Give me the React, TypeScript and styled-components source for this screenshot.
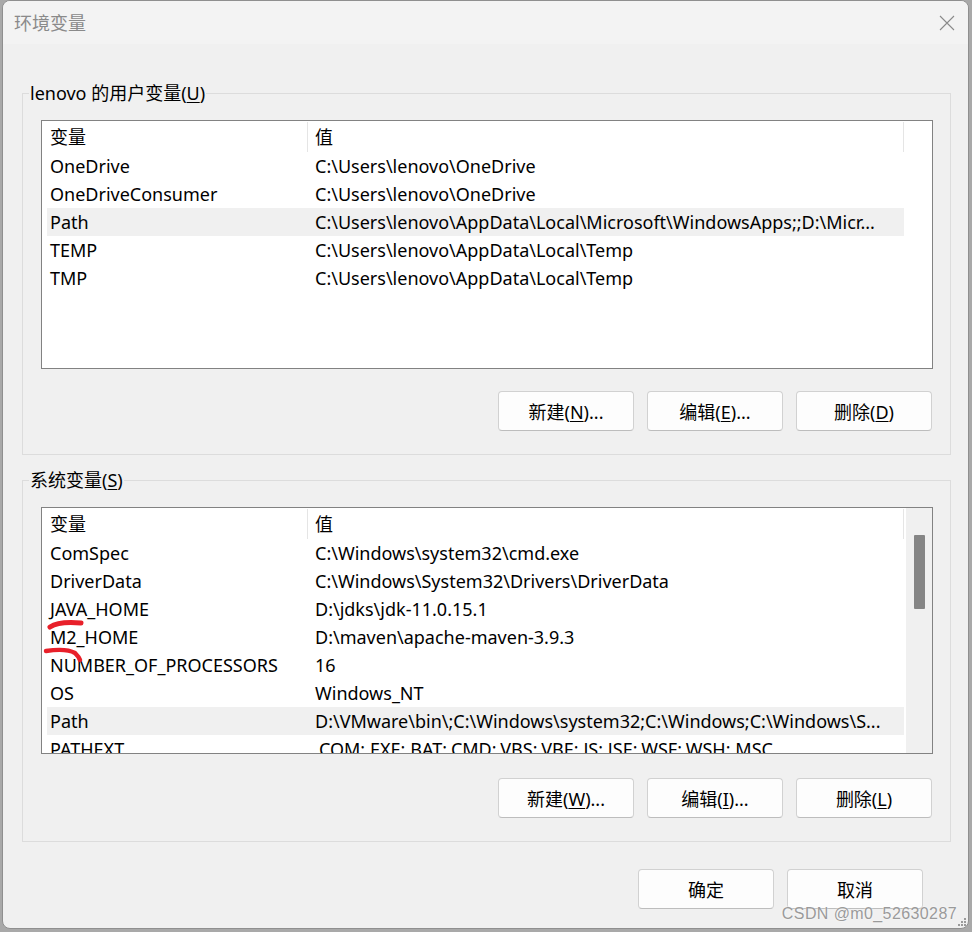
import React from "react";
import styled, { createGlobalStyle } from "styled-components";

const USER_VARS = [
  { id: 1, name: "OneDrive", value: "C:\\Users\\lenovo\\OneDrive" },
  { id: 2, name: "OneDriveConsumer", value: "C:\\Users\\lenovo\\OneDrive" },
  {
    id: 3,
    name: "Path",
    value: "C:\\Users\\lenovo\\AppData\\Local\\Microsoft\\WindowsApps;;D:\\Micr...",
    selected: true,
  },
  { id: 4, name: "TEMP", value: "C:\\Users\\lenovo\\AppData\\Local\\Temp" },
  { id: 5, name: "TMP", value: "C:\\Users\\lenovo\\AppData\\Local\\Temp" },
];

const SYSTEM_VARS = [
  { id: 1, name: "ComSpec", value: "C:\\Windows\\system32\\cmd.exe" },
  { id: 2, name: "DriverData", value: "C:\\Windows\\System32\\Drivers\\DriverData" },
  { id: 3, name: "JAVA_HOME", value: "D:\\jdks\\jdk-11.0.15.1" },
  { id: 4, name: "M2_HOME", value: "D:\\maven\\apache-maven-3.9.3" },
  { id: 5, name: "NUMBER_OF_PROCESSORS", value: "16" },
  { id: 6, name: "OS", value: "Windows_NT" },
  {
    id: 7,
    name: "Path",
    value: "D:\\VMware\\bin\\;C:\\Windows\\system32;C:\\Windows;C:\\Windows\\S...",
    selected: true,
  },
  { id: 8, name: "PATHEXT", value: ".COM;.EXE;.BAT;.CMD;.VBS;.VBE;.JS;.JSE;.WSF;.WSH;.MSC" },
];

const GlobalStyle = createGlobalStyle`
  html, body {
    margin: 0;
    padding: 0;
    background: #a9a9a9;
    font-family: "Noto Sans", "Noto Sans CJK SC", sans-serif;
    color: #000;
  }
`;

const Window = styled.div`
  position: relative;
  box-sizing: border-box;
  margin-left: 2px;
  width: 967px;
  height: 929px;
  border: 1px solid #8f8f8f;
  border-radius: 8px;
  background: #f0f0f0;
  overflow: hidden;
  display: flex;
  flex-direction: column;
`;

const TitleBar = styled.div`
  height: 43px;
  flex-shrink: 0;
  background: #f3f3f3;
  display: flex;
  align-items: center;
  justify-content: space-between;
  padding: 0 13px 0 11px;
`;

const Title = styled.div`
  font-size: 18px;
  color: #8a8a8a;
  line-height: 24px;
`;

const CloseIcon = styled.svg`
  width: 16px;
  height: 16px;
`;

const Body = styled.div`
  padding: 49px 17px 0 19px;
  display: flex;
  flex-direction: column;
`;

const Group = styled.div`
  border: 1px solid #dcdcdc;
  padding: 0 17px 23px 18px;
  & + & {
    margin-top: 25px;
  }
`;

const Legend = styled.div`
  width: fit-content;
  margin: -13px 0 0 -12px;
  padding: 0 1px;
  height: 24px;
  line-height: 24px;
  font-size: 18px;
  background: #f0f0f0;
`;

const Mnemonic = styled.span`
  text-decoration: underline;
  text-underline-offset: 2px;
`;

const ListBox = styled.div<{ $height: number }>`
  position: relative;
  margin-top: 15px;
  box-sizing: border-box;
  height: ${p => p.$height}px;
  border: 1px solid #828282;
  background: #fff;
  display: flex;
  overflow: hidden;
`;

const Table = styled.div`
  flex: 1;
  min-width: 0;
  padding-left: 5px;
`;

const HeaderRow = styled.div`
  display: grid;
  grid-template-columns: 261px 596px;
  width: 857px;
  height: 31px;
  font-size: 18px;
`;

const HeaderCell = styled.div<{ $pad: number }>`
  padding-left: ${p => p.$pad}px;
  line-height: 30px;
  border-right: 1px solid #e5e5e5;
  margin: 1px 0 1px;
`;

const Row = styled.div<{ $selected?: boolean }>`
  display: grid;
  grid-template-columns: 261px 596px;
  width: 857px;
  height: 28px;
  line-height: 28px;
  font-size: 18px;
  background: ${p => (p.$selected ? "#f0f0f0" : "transparent")};
`;

const Cell = styled.div<{ $pad: number }>`
  padding-left: ${p => p.$pad}px;
  white-space: nowrap;
  overflow: hidden;
  text-overflow: ellipsis;
`;

const ScrollTrack = styled.div`
  width: 26px;
  flex-shrink: 0;
  background: #f0f0f0;
  padding-top: 27px;
  display: flex;
  justify-content: center;
  box-sizing: border-box;
`;

const ScrollThumb = styled.div`
  width: 11px;
  height: 74px;
  background: #858585;
  border-radius: 1px;
`;

const ButtonRow = styled.div<{ $top: number; $right: number }>`
  display: flex;
  justify-content: flex-end;
  gap: 13px;
  margin-top: ${p => p.$top}px;
  padding-right: ${p => p.$right}px;
`;

const Button = styled.button`
  box-sizing: border-box;
  width: 136px;
  height: 40px;
  padding: 0;
  background: #fdfdfd;
  border: 1px solid #d1d1d1;
  border-bottom-color: #bdbdbd;
  border-radius: 4px;
  font-family: "Noto Sans", "Noto Sans CJK SC", sans-serif;
  font-size: 18px;
  color: #000;
`;

const Marks = styled.svg`
  position: absolute;
  left: 0;
  top: 0;
  width: 100%;
  height: 100%;
  pointer-events: none;
`;

const Watermark = styled.div`
  position: absolute;
  right: 11px;
  bottom: 5px;
  font-family: "Liberation Sans", "Noto Sans", sans-serif;
  font-size: 16px;
  letter-spacing: 0.4px;
  color: #9a9a9a;
  text-shadow: 0 0 2px #fff;
`;

const Grip = styled.svg`
  position: absolute;
  right: 1px;
  bottom: 1px;
  width: 10px;
  height: 10px;
`;

type Item = { id: number; name: string; value: string; selected?: boolean };

const VarList: React.FC<{ items: Item[]; height: number; scroll?: boolean; marks?: boolean }> = ({
  items,
  height,
  scroll,
  marks,
}) => (
  <ListBox $height={height}>
    <Table>
      <HeaderRow>
        <HeaderCell $pad={3}>变量</HeaderCell>
        <HeaderCell $pad={7}>值</HeaderCell>
      </HeaderRow>
      {items.map(item => (
        <Row key={item.id} $selected={item.selected}>
          <Cell $pad={3}>{item.name}</Cell>
          <Cell $pad={7}>{item.value}</Cell>
        </Row>
      ))}
    </Table>
    {scroll && (
      <ScrollTrack>
        <ScrollThumb />
      </ScrollTrack>
    )}
    {marks && (
      <Marks>
        <path d="M8 119 Q 17 113 39 115" stroke="#e8202a" strokeWidth="5" fill="none" strokeLinecap="round" />
        <path d="M4 143 Q 24 140 33 145 Q 37 149 38 152" stroke="#e8202a" strokeWidth="4.5" fill="none" strokeLinecap="round" />
      </Marks>
    )}
  </ListBox>
);

export default function App() {
  return (
    <>
      <GlobalStyle />
      <Window>
        <TitleBar>
          <Title>环境变量</Title>
          <CloseIcon viewBox="0 0 16 16">
            <path d="M1 1 L15 15 M15 1 L1 15" stroke="#8a8a8a" strokeWidth="1.1" fill="none" />
          </CloseIcon>
        </TitleBar>
        <Body>
          <Group>
            <Legend>
              lenovo 的用户变量(<Mnemonic>U</Mnemonic>)
            </Legend>
            <VarList items={USER_VARS} height={249} />
            <ButtonRow $top={22} $right={1}>
              <Button>
                新建(<Mnemonic>N</Mnemonic>)...
              </Button>
              <Button>
                编辑(<Mnemonic>E</Mnemonic>)...
              </Button>
              <Button>
                删除(<Mnemonic>D</Mnemonic>)
              </Button>
            </ButtonRow>
          </Group>
          <Group>
            <Legend>
              系统变量(<Mnemonic>S</Mnemonic>)
            </Legend>
            <VarList items={SYSTEM_VARS} height={247} scroll marks />
            <ButtonRow $top={24} $right={1}>
              <Button>
                新建(<Mnemonic>W</Mnemonic>)...
              </Button>
              <Button>
                编辑(<Mnemonic>I</Mnemonic>)...
              </Button>
              <Button>
                删除(<Mnemonic>L</Mnemonic>)
              </Button>
            </ButtonRow>
          </Group>
          <ButtonRow $top={27} $right={28}>
            <Button>确定</Button>
            <Button>取消</Button>
          </ButtonRow>
        </Body>
        <Watermark>CSDN @m0_52630287</Watermark>
        <Grip viewBox="0 0 10 10">
          <g fill="#9a9a9a">
            <rect x="7" y="1" width="2" height="2" />
            <rect x="4" y="4" width="2" height="2" />
            <rect x="7" y="4" width="2" height="2" />
            <rect x="1" y="7" width="2" height="2" />
            <rect x="4" y="7" width="2" height="2" />
            <rect x="7" y="7" width="2" height="2" />
          </g>
        </Grip>
      </Window>
    </>
  );
}
